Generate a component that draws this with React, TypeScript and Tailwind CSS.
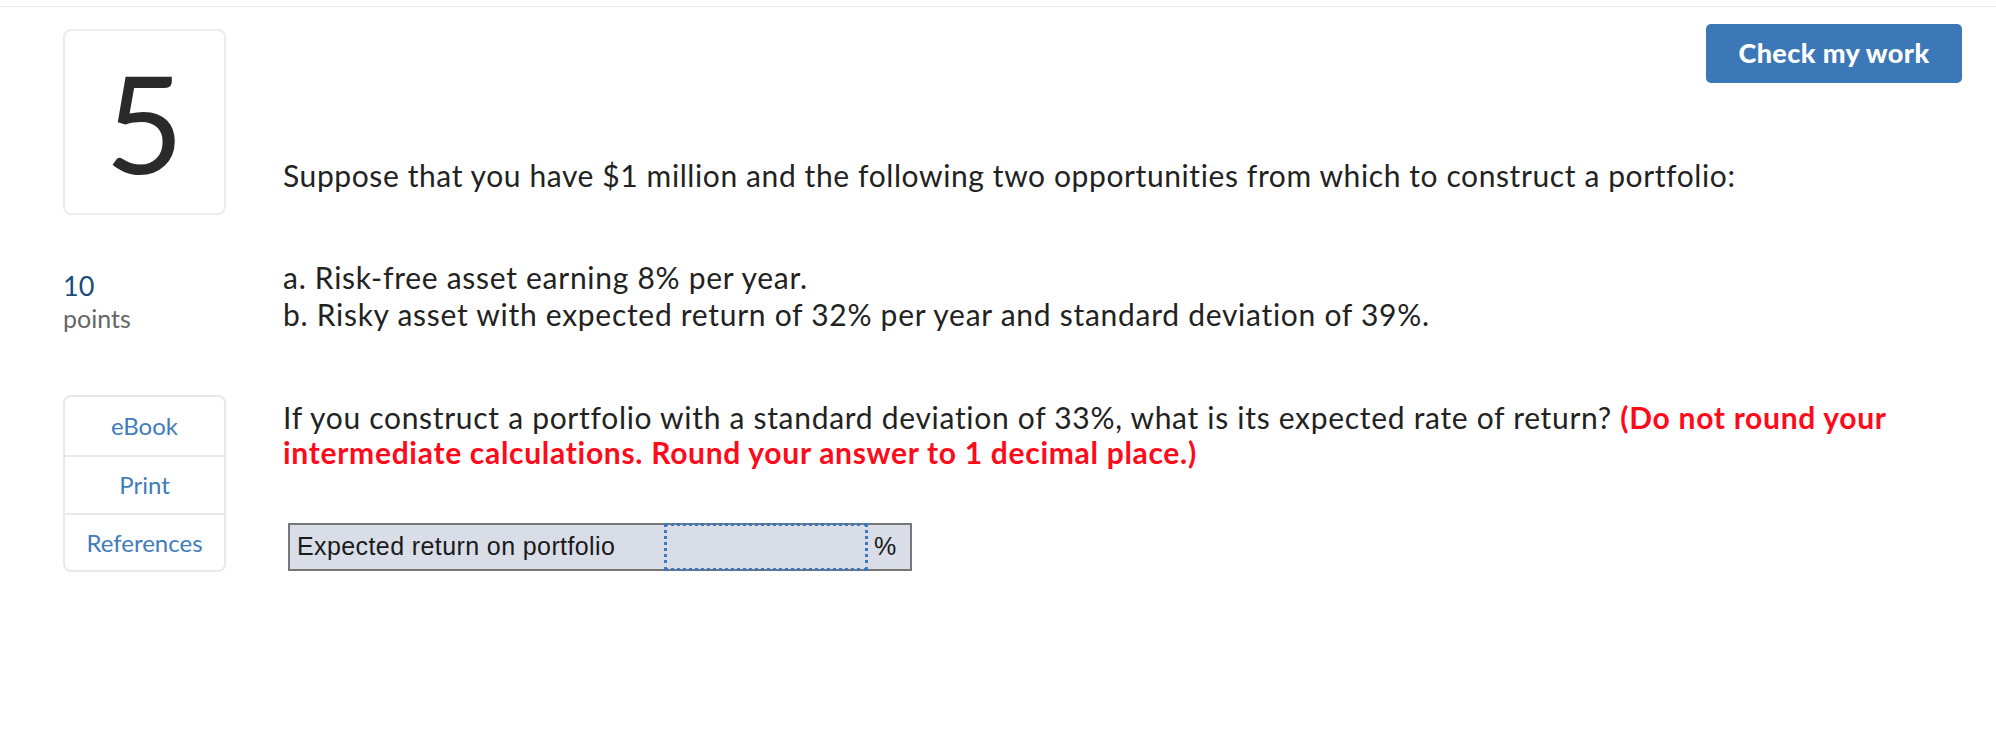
import React from 'react';

const sans = { fontFamily: 'Lato, "Open Sans", sans-serif' };

const SideLinks: React.FC = () => (
    <div className="w-[163px] mt-[61px] h-[177px] flex flex-col border-2 border-[#e8e8e8] rounded-[8px] bg-white">
        <a className="h-[60px] flex items-center justify-center text-[24px] text-[#3f7cbc] border-b-2 border-[#e8e8e8]">eBook</a>
        <a className="h-[58px] flex items-center justify-center text-[24px] text-[#3f7cbc] border-b-2 border-[#e8e8e8]">Print</a>
        <a className="flex-1 flex items-center justify-center text-[24px] text-[#3f7cbc]">References</a>
    </div>
);

const App: React.FC = (): React.ReactElement => {
    return (
        <div className="w-[1996px] h-[756px] bg-white overflow-hidden" style={sans}>
            <div className="pt-[6px]">
                <div className="h-px bg-[#ececec]" />
            </div>
            <div className="pl-[63px] pr-[34px] pt-[17px] flex flex-col text-[#222]">
                {/* row 1 */}
                <div className="flex items-start">
                    <div className="w-[163px] h-[186px] mt-[5px] border-2 border-[#ececec] rounded-[8px] flex items-center justify-center">
                        <span className="text-[136px] leading-none text-[#2a2a2a]">5</span>
                    </div>
                    <div className="flex-1 ml-[57px] flex flex-col">
                        <button className="self-end w-[256px] h-[59px] rounded-[5px] bg-[#3c78b7] text-white text-[27px] font-black tracking-[0.4px]">
                            Check my work
                        </button>
                        <p className="mt-[74px] text-[30px] leading-[36px] tracking-[0.6px] whitespace-nowrap">
                            Suppose that you have $1 million and the following two opportunities from which to construct a portfolio:
                        </p>
                    </div>
                </div>

                {/* row 2 */}
                <div className="flex items-start">
                    <div className="w-[163px] mt-[55px] flex flex-col">
                        <span className="text-[27px] leading-[32px] text-[#1b4a7c]">10</span>
                        <span className="text-[25px] leading-[32px] text-[#666]">points</span>
                    </div>
                    <div className="flex-1 ml-[57px] mt-[44px] text-[30px] leading-[37px] tracking-[0.72px] whitespace-nowrap">
                        <p>a. Risk-free asset earning 8% per year.</p>
                        <p>b. Risky asset with expected return of 32% per year and standard deviation of 39%.</p>
                    </div>
                </div>

                {/* row 3 */}
                <div className="flex items-start">
                    <SideLinks />
                    <div className="flex-1 ml-[57px] mt-[66px] flex flex-col">
                        <p className="text-[30px] leading-[35px] tracking-[0.7px]">
                            <span className="block whitespace-nowrap">
                                If you construct a portfolio with a standard deviation of 33%, what is its expected rate of return?{' '}
                                <span className="font-bold text-[#ff0a1a]">(Do not round your</span>
                            </span>
                            <span className="block whitespace-nowrap font-bold text-[#ff0a1a]">
                                intermediate calculations. Round your answer to 1 decimal place.)
                            </span>
                        </p>
                        <div
                            className="mt-[53px] ml-[5px] w-[624px] h-[48px] flex border-2 border-[#777] bg-[#d9dde7] text-[25px] text-[#1a1a1a]"
                            style={{ fontFamily: '"Liberation Sans", Arial, sans-serif' }}
                        >
                            <div className="w-[374px] shrink-0 flex items-center pl-[7px] tracking-[0.4px] whitespace-nowrap">
                                Expected return on portfolio
                            </div>
                            <div className="w-[204px] shrink-0 -my-[2px] border-[3px] border-dotted border-[#3b78c2]" />
                            <div className="flex-1 flex items-center pl-[6px]">%</div>
                        </div>
                    </div>
                </div>
            </div>
        </div>
    );
};

export default App;
